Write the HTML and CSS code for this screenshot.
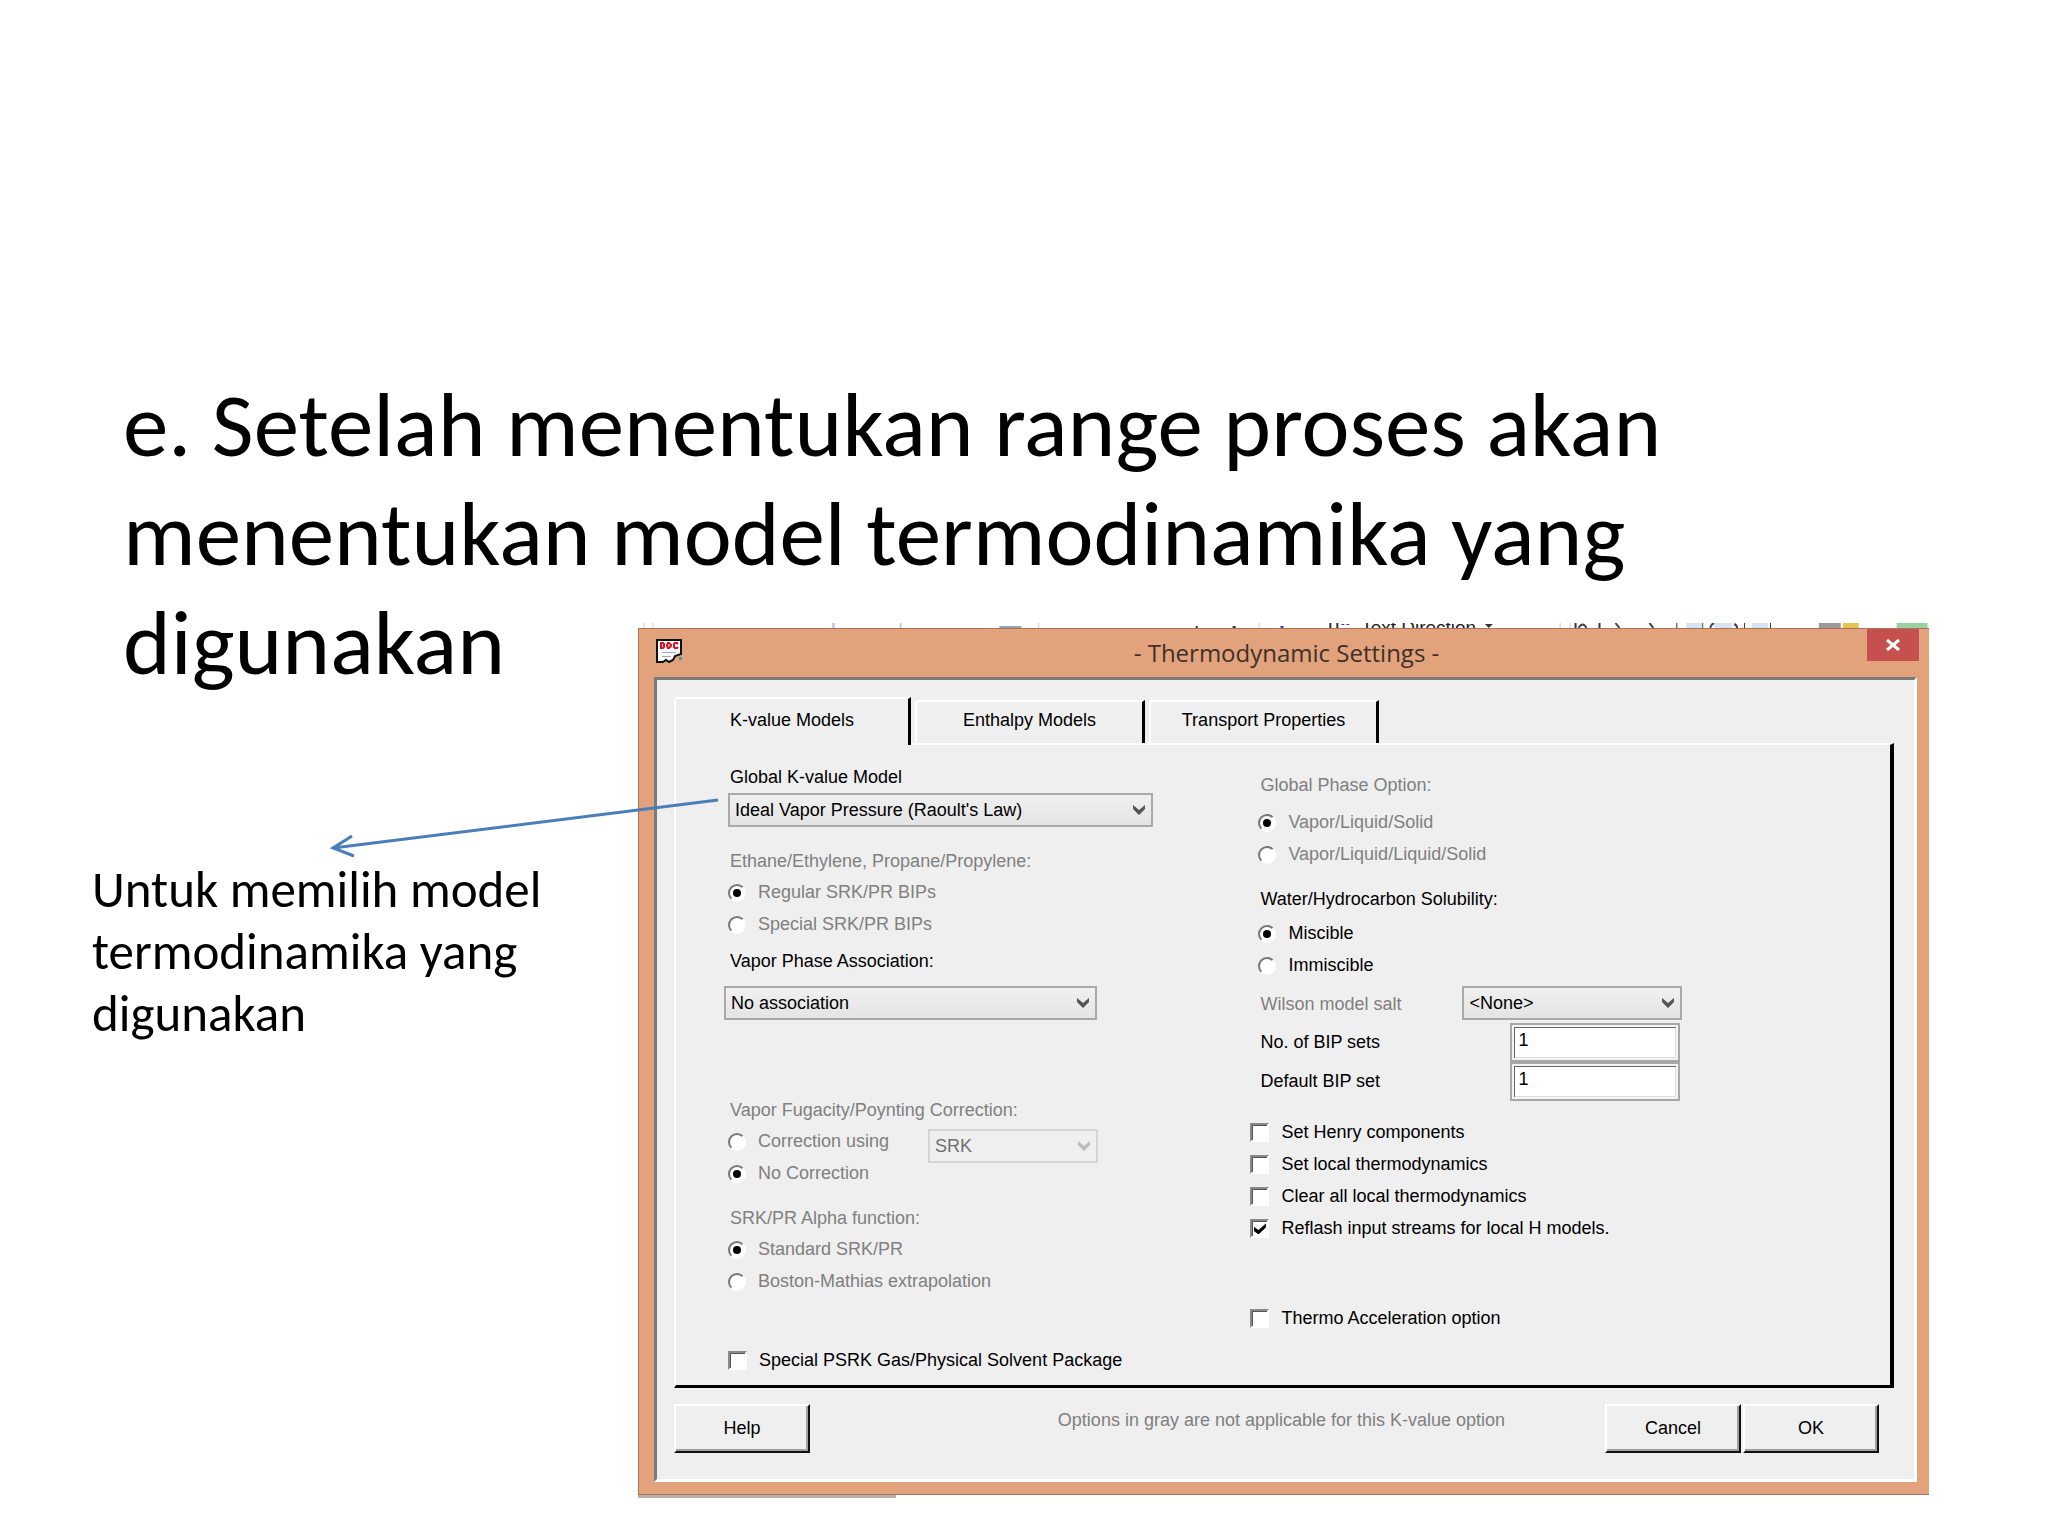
FILE: index.html
```html
<!DOCTYPE html>
<html lang="id">
<head>
	<meta charset="UTF-8">
	<meta name="viewport" content="width=device-width, initial-scale=1.0">
	<title>Thermodynamic Settings</title>
	<link rel="stylesheet" href="styles.css">
</head>
<body>
	<main class="slide">
		<h1 class="heading">e. Setelah menentukan range proses akan menentukan model termodinamika yang digunakan</h1>
		<div class="stage">
			<p class="note">Untuk memilih model termodinamika yang digunakan</p>
			<div class="shot">
				<!-- sliver of the ribbon behind the window -->
				<svg class="strip" viewBox="0 0 1292 5">
					<path fill="#c9ccd6" d="M4 0h1v5h-1zM13 0h1v5h-1zM193 0h3v5h-3zM261 0h2v5h-2zM400 0h1v5h-1zM621 0h1v5h-1zM923 0h1v5h-1zM933 0h1v5h-1z"/>
					<path fill="#8ea6b8" d="M361 3h22v2h-22z"/>
					<path fill="#333" d="M558 3h2v2h-2zM595 3h3v2h-3zM692 0h2v5h-2zM699 0h2v5h-2zM938 0h2v5h-2zM962 0h2v5h-2zM1040 0h1v5h-1zM1066 0h1v5h-1zM1108 0h1v5h-1zM1134 0h1v5h-1zM848 1h8l-4 4z"/>
					<path fill="#34a" d="M643 3h3v2h-3zM704 1h3v1h-3zM709 1h3v1h-3z"/>
					<path fill="#d5e3f2" d="M1050 0h16v5h-16zM1078 0h18v5h-18zM1116 0h16v5h-16z"/>
					<path fill="none" stroke="#445" stroke-width="2" d="M979 0l4 5M1013 0l4 5M1074 5q1-4 4-5M1098 1q3 1 3 4M942 5q4-7 8 0"/>
					<path fill="#9a9a9a" d="M1183 0h22v5h-22z"/>
					<path fill="#e3c352" d="M1207 0h16v5h-16z"/>
					<path fill="#99d1a3" d="M1261 0h31v5h-31z"/>
					<text class="strip-text" x="724" y="11">Text Direction</text>
				</svg>
				<section class="window">
					<header class="titlebar">
						<svg class="doc-icon" viewBox="0 0 26 24">
							<path fill="#fff" stroke="#111" stroke-width="2" d="M1 1h24v14l-6 2-2 4-4 2-3-2-3 2H1z"/>
							<path fill="#3a9aa0" d="M23 18h3v3h-3z"/>
							<path fill="none" stroke="#e01020" stroke-width="2" d="M4 4h3l1 1v3l-1 1H4M5 4v5M12 4h1l2 2v1l-2 2h-1l-1-2v-1zM22 5l-1-1h-2l-1 1v3l1 1h2l1-1"/>
							<path fill="none" stroke="#aaa" d="M6 13.500h14M6 17.500h9"/>
						</svg>
						<h2 class="title">- Thermodynamic Settings -</h2>
						<button class="close" type="button" aria-label="Close">
							<svg viewBox="0 0 14 12"><path fill="none" stroke="#fff" stroke-width="3" d="M1 1l12 10M13 1L1 11"/></svg>
						</button>
					</header>
					<form class="client">
						<nav class="tabs">
							<button class="tab active" type="button">K-value Models</button>
							<button class="tab" type="button">Enthalpy Models</button>
							<button class="tab" type="button">Transport Properties</button>
						</nav>
						<div class="panel">
							<div class="column">
								<div class="group">
									<label class="caption" for="kmodel">Global K-value Model</label>
									<div class="combo combo-wide">
										<select id="kmodel"><option>Ideal Vapor Pressure (Raoult's Law)</option></select>
										<svg viewBox="0 0 12 10"><path d="M0 0l6 5 6-5v4l-6 6-6-6z"/></svg>
									</div>
								</div>
								<div class="group gray space-m">
									<div class="caption">Ethane/Ethylene, Propane/Propylene:</div>
									<label class="option"><input type="radio" name="bips" disabled checked>Regular SRK/PR BIPs</label>
									<label class="option"><input type="radio" name="bips" disabled>Special SRK/PR BIPs</label>
								</div>
								<div class="group space-xs">
									<label class="caption" for="assoc">Vapor Phase Association:</label>
									<div class="combo combo-out">
										<select id="assoc"><option>No association</option></select>
										<svg viewBox="0 0 12 10"><path d="M0 0l6 5 6-5v4l-6 6-6-6z"/></svg>
									</div>
								</div>
								<div class="split gray space-xl">
									<div class="group">
										<div class="caption">Vapor Fugacity/Poynting Correction:</div>
										<label class="option"><input type="radio" name="corr" disabled>Correction using</label>
										<label class="option"><input type="radio" name="corr" disabled checked>No Correction</label>
									</div>
									<div class="combo combo-small">
										<select disabled aria-label="Correction"><option>SRK</option></select>
										<svg viewBox="0 0 12 10"><path d="M0 0l6 5 6-5v4l-6 6-6-6z"/></svg>
									</div>
								</div>
								<div class="group gray space-s">
									<div class="caption">SRK/PR Alpha function:</div>
									<label class="option"><input type="radio" name="alpha" disabled checked>Standard SRK/PR</label>
									<label class="option"><input type="radio" name="alpha" disabled>Boston-Mathias extrapolation</label>
								</div>
								<div class="group space-l">
									<label class="option"><input type="checkbox">Special PSRK Gas/Physical Solvent Package</label>
								</div>
							</div>
							<div class="column column-right">
								<div class="group indent gray">
									<div class="caption caption-loose">Global Phase Option:</div>
									<label class="option"><input type="radio" name="phase" disabled checked>Vapor/Liquid/Solid</label>
									<label class="option"><input type="radio" name="phase" disabled>Vapor/Liquid/Liquid/Solid</label>
								</div>
								<div class="group indent space-s">
									<div class="caption caption-mid">Water/Hydrocarbon Solubility:</div>
									<label class="option"><input type="radio" name="solub" checked>Miscible</label>
									<label class="option"><input type="radio" name="solub">Immiscible</label>
								</div>
								<div class="fields indent space-xs">
									<label class="caption gray" for="salt">Wilson model salt</label>
									<div class="combo combo-salt">
										<select id="salt"><option>&lt;None&gt;</option></select>
										<svg viewBox="0 0 12 10"><path d="M0 0l6 5 6-5v4l-6 6-6-6z"/></svg>
									</div>
									<label class="caption" for="sets">No. of BIP sets</label>
									<input class="number" id="sets" type="text" value="1">
									<label class="caption" for="set">Default BIP set</label>
									<input class="number" id="set" type="text" value="1">
								</div>
								<div class="group space-checks">
									<label class="option"><input type="checkbox">Set Henry components</label>
									<label class="option"><input type="checkbox">Set local thermodynamics</label>
									<label class="option"><input type="checkbox">Clear all local thermodynamics</label>
									<label class="option"><input type="checkbox" checked>Reflash input streams for local H models.</label>
								</div>
								<div class="group space-thermo">
									<label class="option"><input type="checkbox">Thermo Acceleration option</label>
								</div>
							</div>
						</div>
						<footer class="buttons">
							<button class="btn" type="button">Help</button>
							<p class="hint gray">Options in gray are not applicable for this K-value option</p>
							<button class="btn" type="button">Cancel</button>
							<button class="btn" type="button">OK</button>
						</footer>
					</form>
				</section>
				<div class="strip-bottom"></div>
			</div>
			<svg class="arrow" viewBox="0 0 392 60">
				<path d="M389 5L4 53M23 41L4 53l21 8"/>
			</svg>
		</div>
	</main>
</body>
</html>
```
FILE: styles.css
```css
* {
    box-sizing: border-box;
}

body {
    margin: 0;
    background-color: #fff;
    color: #000;
    font-family: "Liberation Sans", Arial, sans-serif;
    font-size: 18px;
}

h1, h2, p {
    margin: 0;
    font-weight: normal;
}

.slide {
    padding: 370px 119px 0 0;
}

.heading {
    padding-left: 123px;
    font: 91px/109px Carlito, Calibri, Lato, sans-serif;
}

.stage {
    display: grid;
    grid-template-columns: 638px 1fr;
    position: relative;
    margin-top: -74px;
}

.note {
    padding: 236px 60px 0 92px;
    font: 51px/62px Carlito, Calibri, Lato, sans-serif;
}

.arrow {
    position: absolute;
    left: 329px;
    top: 172px;
    width: 392px;
    height: 60px;
    overflow: visible;
    fill: none;
    stroke: #4a7ebb;
    stroke-width: 3px;
}

/* window */
.strip {
    display: block;
    width: 100%;
    overflow: hidden;
}

.strip-text {
    font-size: 19px;
    fill: #222;
}

.strip-bottom {
    width: 20%;
    height: 3px;
    background-color: #b5b0ac;
}

.window {
    padding: 0 12px 12px 15px;
    background-color: #e1a27c;
    border: 1px solid #a9745a;
    border-right: none;
}

.titlebar {
    display: grid;
    grid-template-columns: 52px 1fr 52px;
    align-items: start;
    height: 48px;
    margin-right: -2px;
}

.doc-icon {
    width: 26px;
    height: 24px;
    margin: 10px 0 0 2px;
}

.title {
    text-align: center;
    font: 24px/48px "Open Sans", "Noto Sans", sans-serif;
    color: #3f3029;
}

.close {
    display: grid;
    place-items: center;
    width: 52px;
    height: 32px;
    padding: 0;
    border: none;
    background-color: #c6504e;
}

.close svg {
    width: 14px;
    height: 12px;
}

.client {
    padding: 17px 20px 26px 17px;
    background-color: #efefef;
    border: 3px solid;
    border-color: #7b7b7b #fff #fff #7b7b7b;
}

.tabs {
    display: flex;
    align-items: flex-end;
    gap: 4px;
}

.tab {
    width: 230px;
    height: 43px;
    padding: 0 0 3px;
    background-color: #efefef;
    border: 2px solid #fff;
    border-right: 3px solid #000;
    border-bottom: none;
    border-radius: 3px 0 0 0;
    font: inherit;
    color: #000;
}

.tab.active {
    width: 237px;
    height: 48px;
    margin-bottom: -2px;
    padding-bottom: 2px;
    z-index: 1;
}

.panel {
    display: grid;
    grid-template-columns: 9fr 11fr;
    padding: 16px 10px 8px 52px;
    border: 2px solid #fff;
    border-right: 4px solid #000;
    border-bottom: 3px solid #000;
}

.column-right {
    padding: 8px 0 0 4px;
}

.indent {
    padding-left: 8px;
}

.gray {
    color: #808080;
}

.space-xs { margin-top: 4px; }
.space-s { margin-top: 12px; }
.space-m { margin-top: 18px; }
.space-l { margin-top: 47px; }
.space-checks { margin-top: 16px; }
.space-thermo { margin-top: 58px; }
.space-xl { margin-top: 74px; }

.caption {
    display: block;
    padding-left: 2px;
    line-height: 32px;
}

.caption-loose {
    margin-bottom: 6px;
}

.caption-mid {
    margin-bottom: 3px;
}

.option {
    display: flex;
    align-items: center;
    gap: 12px;
    height: 32px;
}

.option input {
    appearance: none;
    display: grid;
    place-items: center;
    margin: 0;
    background-color: #fff;
}

.option input[type=radio] {
    width: 18px;
    height: 18px;
    border: 2px solid;
    border-color: #777 #fff #fff #777;
    border-radius: 50%;
}

.option input[type=radio]:checked::before {
    content: "";
    width: 8px;
    height: 8px;
    border-radius: 50%;
    background-color: #000;
}

.option input[type=checkbox] {
    width: 19px;
    height: 19px;
    border: 2px solid;
    border-color: #8a8a8a #fff #fff #8a8a8a;
    box-shadow: inset 1px 1px 0 #555;
}

.option input[type=checkbox]:checked::before {
    content: "";
    width: 12px;
    height: 11px;
    background-color: #000;
    clip-path: polygon(0 30%, 38% 60%, 100% 0, 100% 36%, 38% 100%, 0 68%);
}

/* select with its arrow in the same cell */
.combo {
    display: grid;
    align-items: center;
    height: 34px;
}

.combo select,
.combo svg {
    grid-area: 1 / 1;
}

.combo select {
    appearance: none;
    width: 100%;
    height: 34px;
    padding: 0 5px;
    border: 2px solid #a9a9a9;
    border-radius: 0;
    background: linear-gradient(#f0f0f0, #e4e4e4);
    font: inherit;
    color: #000;
}

.combo select:disabled {
    border-color: #d4d4d4;
    background: #efefef;
    color: #6f6f6f;
    opacity: 1;
}

.combo svg {
    justify-self: end;
    width: 12px;
    height: 10px;
    margin-right: 8px;
    fill: #555;
    pointer-events: none;
}

.combo select:disabled + svg {
    fill: #bbb;
}

.combo-wide {
    width: 425px;
}

.combo-out {
    width: 373px;
    margin: 9px 0 0 -4px;
}

.combo-small {
    width: 170px;
}

.combo-salt {
    width: 220px;
    margin-bottom: 3px;
}

.split {
    display: grid;
    grid-template-columns: 200px 1fr;
    white-space: nowrap;
}

.split .combo {
    margin-top: 35px;
}

.fields {
    display: grid;
    grid-template-columns: 204px 220px;
    align-items: center;
}

.number {
    justify-self: end;
    width: 170px;
    height: 39px;
    margin-right: 2px;
    padding: 0 6px 4px;
    border: 2px solid #a5a7aa;
    background-color: #fff;
    box-shadow: inset 0 0 0 2px #f4f4f4, inset 3px 3px 0 #666, inset -3px -3px 0 #ddd;
    font: inherit;
}

.buttons {
    display: grid;
    grid-template-columns: 136px 1fr 136px 136px;
    column-gap: 2px;
    padding: 16px 15px 0 0;
}

.btn {
    height: 49px;
    padding: 0;
    background-color: #efefef;
    border: 2px solid;
    border-color: #fff #111 #111 #fff;
    box-shadow: inset -2px -2px 0 #a0a0a0;
    font: inherit;
    color: #000;
}

.hint {
    padding-left: 148px;
    text-align: center;
    line-height: 32px;
}
```
